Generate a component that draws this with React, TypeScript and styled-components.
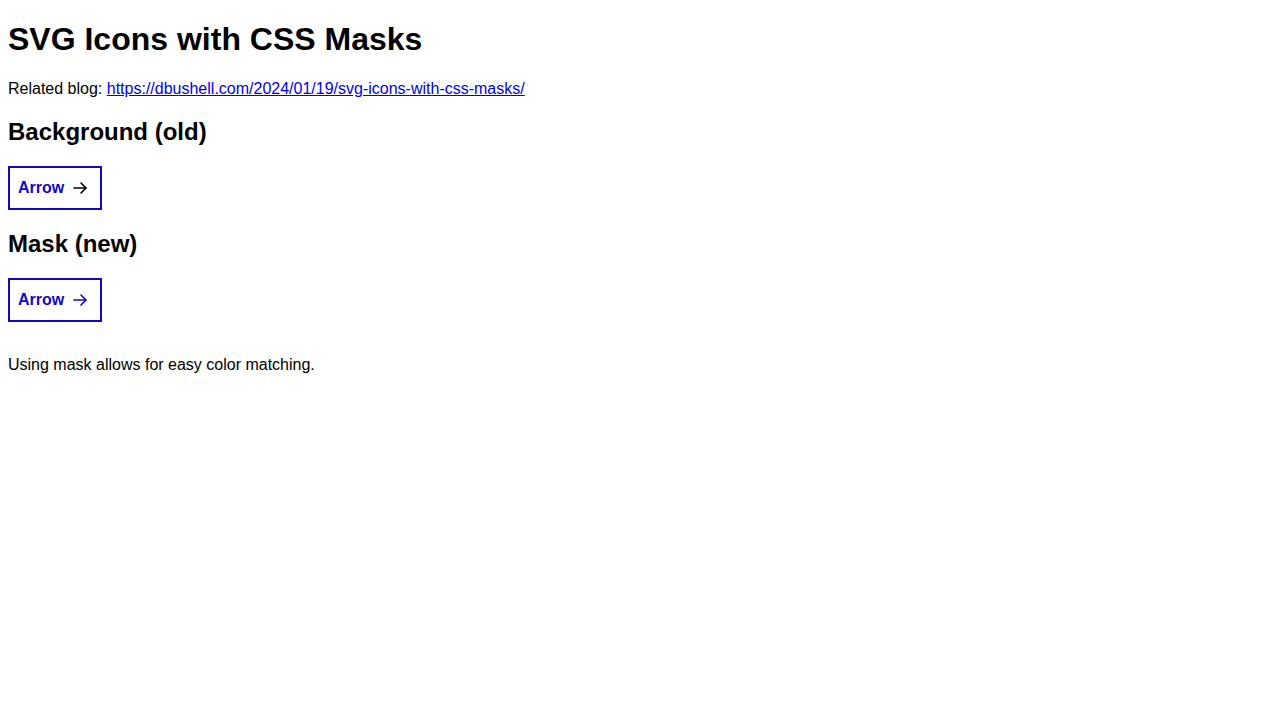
import React from "react";
import styled, { createGlobalStyle } from "styled-components";

const GlobalStyle = createGlobalStyle`
  body {
    margin: 0 8px 8px;
    background: #ffffff;
    color: #000000;
    font-family: "Liberation Sans", Arial, sans-serif;
  }
`;

const Title = styled.h1`
  font-size: 32px;
  font-weight: bold;
  margin: 21.44px 0;
`;

const Text = styled.p<{ $top?: number }>`
  font-size: 16px;
  margin: ${({ $top }) => ($top ? `${$top}px` : "16px")} 0 16px;
`;

const Link = styled.a`
  color: #0000ee;
  text-decoration: underline;
`;

const Heading = styled.h2`
  font-size: 24px;
  font-weight: bold;
  margin: 19.92px 0;
`;

const Button = styled.a<{ $iconColor: string }>`
  display: inline-flex;
  align-items: center;
  gap: 8px;
  padding: 10px 8px;
  border: 2px solid #1208c4;
  color: #1208c4;
  font-size: 16px;
  font-weight: bold;
  text-decoration: none;
  cursor: pointer;

  svg {
    width: 20px;
    height: 20px;
    color: ${({ $iconColor }) => $iconColor};
  }
`;

const ArrowIcon = () => (
  <svg viewBox="0 0 20 20" fill="none" stroke="currentColor" strokeWidth="1.6" strokeLinecap="round" strokeLinejoin="round">
    <path d="M2 10h12" />
    <path d="M9 5l5 5-5 5" />
  </svg>
);

export default function App() {
  return (
    <>
      <GlobalStyle />
      <Title>SVG Icons with CSS Masks</Title>
      <Text>
        Related blog:{" "}
        <Link href="#">https://dbushell.com/2024/01/19/svg-icons-with-css-masks/</Link>
      </Text>
      <Heading>Background (old)</Heading>
      <Button $iconColor="#000000">
        Arrow
        <ArrowIcon />
      </Button>
      <Heading>Mask (new)</Heading>
      <Button $iconColor="#1208c4">
        Arrow
        <ArrowIcon />
      </Button>
      <Text $top={34}>Using mask allows for easy color matching.</Text>
    </>
  );
}
